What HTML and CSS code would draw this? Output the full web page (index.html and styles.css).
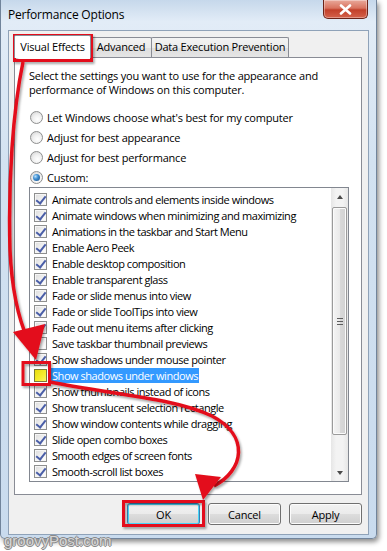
FILE: index.html
```html
<!DOCTYPE html>
<html lang="en">
<head>
    <meta charset="UTF-8">
    <title>Performance Options</title>
    <link rel="stylesheet" href="styles.css">
</head>
<body>
    <div class="window">
        <div class="titlebar">
            <span class="title">Performance Options</span>
            <span class="close">
                <svg width="13" height="11" viewBox="0 0 13 11"><path d="M2 1.5 L11 9.5 M11 1.5 L2 9.5" stroke="#fff" stroke-width="2.6" stroke-linecap="round"/></svg>
            </span>
        </div>

        <div class="client">
            <!-- Tabs -->
            <div class="tabs">
                <div class="tab active">Visual Effects</div>
                <div class="tab tab-adv">Advanced</div>
                <div class="tab tab-dep">Data Execution Prevention</div>
            </div>

            <div class="page">
                <p class="desc">Select the settings you want to use for the appearance and<br>performance of Windows on this computer.</p>

                <div class="radios">
                    <div class="radio-row"><span class="radio"></span>Let Windows choose what's best for my computer</div>
                    <div class="radio-row"><span class="radio"></span>Adjust for best appearance</div>
                    <div class="radio-row"><span class="radio"></span>Adjust for best performance</div>
                    <div class="radio-row"><span class="radio on"></span>Custom:</div>
                </div>

                <div class="listbox">
                    <ul class="items">
                        <li><span class="check on"></span><span class="txt">Animate controls and elements inside windows</span></li>
                        <li><span class="check on"></span><span class="txt">Animate windows when minimizing and maximizing</span></li>
                        <li><span class="check on"></span><span class="txt">Animations in the taskbar and Start Menu</span></li>
                        <li><span class="check on"></span><span class="txt">Enable Aero Peek</span></li>
                        <li><span class="check on"></span><span class="txt">Enable desktop composition</span></li>
                        <li><span class="check on"></span><span class="txt">Enable transparent glass</span></li>
                        <li><span class="check on"></span><span class="txt">Fade or slide menus into view</span></li>
                        <li><span class="check on"></span><span class="txt">Fade or slide ToolTips into view</span></li>
                        <li><span class="check on"></span><span class="txt">Fade out menu items after clicking</span></li>
                        <li><span class="check"></span><span class="txt">Save taskbar thumbnail previews</span></li>
                        <li><span class="check on"></span><span class="txt">Show shadows under mouse pointer</span></li>
                        <li class="selected"><span class="check hot"></span><span class="txt">Show shadows under windows</span></li>
                        <li><span class="check on"></span><span class="txt">Show thumbnails instead of icons</span></li>
                        <li><span class="check on"></span><span class="txt">Show translucent selection rectangle</span></li>
                        <li><span class="check on"></span><span class="txt">Show window contents while dragging</span></li>
                        <li><span class="check on"></span><span class="txt">Slide open combo boxes</span></li>
                        <li><span class="check on"></span><span class="txt">Smooth edges of screen fonts</span></li>
                        <li><span class="check on"></span><span class="txt">Smooth-scroll list boxes</span></li>
                    </ul>
                    <div class="scrollbar">
                        <div class="sb-btn"><span class="arrow-up"></span></div>
                        <div class="sb-track">
                            <div class="thumb"><span class="grip"></span></div>
                        </div>
                        <div class="sb-btn"><span class="arrow-down"></span></div>
                    </div>
                </div>
            </div>

            <!-- Dialog buttons -->
            <div class="buttons">
                <button class="btn default">OK</button>
                <button class="btn">Cancel</button>
                <button class="btn">Apply</button>
            </div>
        </div>
    </div>

    <div class="watermark">groovyPost.com</div>

    <!-- red annotations drawn over the screenshot -->
    <svg class="marks" width="387" height="551" viewBox="0 0 387 551">
        <defs>
            <filter id="shadow" x="-20%" y="-20%" width="140%" height="140%">
                <feDropShadow dx="1.5" dy="2" stdDeviation="1.2" flood-color="#000" flood-opacity="0.35"/>
            </filter>
        </defs>
        <g filter="url(#shadow)" fill="none" stroke="#e3101a" stroke-width="3">
            <rect x="14.5" y="35.5" width="77" height="25"/>
            <rect x="23" y="362.5" width="26.5" height="22"/>
            <rect x="123.5" y="501.5" width="80" height="24"/>
            <path d="M23 62 C 13 110 8 180 10 250 C 12 295 19 320 28 340" stroke-width="3.5"/>
            <path d="M50 382 C 110 394 175 398 212 416 C 250 436 244 470 214 486" stroke-width="3.5"/>
        </g>
        <g filter="url(#shadow)" fill="#e3101a">
            <polygon points="13,332 45,324 36,360"/>
            <polygon points="221,477 203,500 195,474"/>
        </g>
    </svg>
</body>
</html>
```

FILE: styles.css
```css
* {
    box-sizing: border-box;
}
body {
    margin: 0;
    width: 387px;
    height: 551px;
    overflow: hidden;
    position: relative;
    background: #fff;
    font-family: "Open Sans", "Noto Sans", sans-serif;
    font-size: 11px;
    letter-spacing: -0.2px;
    color: #000;
}

/* Window frame */
.window {
    width: 377px;
    height: 539px;
    border: 1px solid #71849b;
    border-top: none;
    border-radius: 0 0 5px 5px;
    background: linear-gradient(180deg, #c6d8eb 0%, #e2ecf7 4%, #d3e2f1 30%, #c9dbee 100%);
    box-shadow: 2px 3px 5px rgba(0, 0, 0, 0.45);
}
.titlebar {
    height: 30px;
    display: flex;
    align-items: flex-start;
}
.title {
    padding: 7px 0 0 7px;
    font-size: 12px;
    line-height: 16px;
}
.close {
    margin-left: auto;
    margin-right: 8px;
    width: 45px;
    height: 19px;
    display: flex;
    align-items: center;
    justify-content: center;
    border: 1px solid #6b2318;
    border-top: none;
    border-radius: 0 0 5px 5px;
    background: linear-gradient(180deg, #e9a99b 0%, #d9735f 45%, #c2402a 55%, #d5624b 100%);
    box-shadow: inset 0 0 0 1px rgba(255, 255, 255, 0.35);
}

/* Client area */
.client {
    margin: 0 7px;
    height: 505px;
    border: 1px solid #8fa2b8;
    background: #f0f0f0;
    padding: 4px 0 0 5px;
}
.tabs {
    display: flex;
    align-items: flex-end;
    height: 22px;
}
.tab {
    height: 20px;
    border: 1px solid #898c95;
    border-bottom: none;
    margin-left: -1px;
    background: linear-gradient(180deg, #f3f3f3 0%, #ebebeb 50%, #dedede 51%, #e5e5e5 100%);
    text-align: center;
    line-height: 18px;
    border-radius: 2px 2px 0 0;
}
.tab.active {
    width: 77px;
    height: 23px;
    margin-left: 0;
    margin-bottom: -1px;
    background: #fff;
    position: relative;
    z-index: 1;
    line-height: 21px;
}
.tab-adv {
    width: 62px;
}
.tab-dep {
    width: 138px;
}

.page {
    width: 348px;
    height: 438px;
    border: 1px solid #898c95;
    background: #fff;
    padding: 11px 0 0 14px;
}
.desc {
    margin: 0;
    line-height: 14px;
}
.radios {
    margin-top: 10px;
}
.radio-row {
    height: 20px;
    display: flex;
    align-items: center;
    gap: 4px;
    padding-left: 1px;
}
.radio {
    width: 13px;
    height: 13px;
    border-radius: 50%;
    border: 1px solid #8e8f8f;
    background: radial-gradient(circle at 60% 65%, #ffffff 0%, #f0f0f0 45%, #cfcfcf 100%);
    display: flex;
    align-items: center;
    justify-content: center;
}
.radio.on::after {
    content: "";
    width: 7px;
    height: 7px;
    border-radius: 50%;
    background: radial-gradient(circle at 35% 35%, #b9e0fb 0%, #3f8fd2 40%, #17497f 100%);
}

/* List of effects */
.listbox {
    width: 320px;
    height: 295px;
    border: 1px solid #828790;
    display: flex;
}
.items {
    flex: 1;
    list-style: none;
    margin: 0;
    padding: 3px 0 0 4px;
    letter-spacing: -0.45px;
}
.items li {
    height: 16px;
    display: flex;
    align-items: center;
    gap: 4px;
    white-space: nowrap;
}
.txt {
    padding: 0 1px;
    line-height: 15px;
}
.items li.selected .txt {
    background: #3399ff;
    color: #fff;
}
.check {
    width: 13px;
    height: 13px;
    flex: none;
    position: relative;
    border: 1px solid #8e8f8f;
    background: linear-gradient(135deg, #dcdcdc 0%, #f4f4f4 60%, #ffffff 100%);
    box-shadow: inset 0 0 0 1px #f6f6f6;
}
.check.on::after {
    content: "";
    position: absolute;
    left: 3px;
    top: 0px;
    width: 4px;
    height: 8px;
    border: solid #4a5ea8;
    border-width: 0 2px 2px 0;
    transform: rotate(38deg);
}
.check.hot {
    border-color: #7a7a3a;
    background: linear-gradient(135deg, #e8dc10 0%, #f6ee30 60%, #fbf56a 100%);
    box-shadow: none;
}

.scrollbar {
    width: 17px;
    display: flex;
    flex-direction: column;
    background: linear-gradient(90deg, #e6e6e6 0%, #f3f3f3 30%, #f3f3f3 70%, #e6e6e6 100%);
}
.sb-btn {
    height: 17px;
    display: flex;
    align-items: center;
    justify-content: center;
}
.arrow-up {
    border: 3.5px solid transparent;
    border-top: none;
    border-bottom: 4px solid #4a4a4a;
}
.arrow-down {
    border: 3.5px solid transparent;
    border-bottom: none;
    border-top: 4px solid #4a4a4a;
}
.sb-track {
    flex: 1;
    padding: 2px 1px 28px;
}
.thumb {
    height: 228px;
    border: 1px solid #9a9a9a;
    border-radius: 2px;
    background: linear-gradient(90deg, #f4f4f4 0%, #eaeaea 50%, #d9d9d9 51%, #d2d2d2 100%);
    box-shadow: inset 0 0 0 1px #fbfbfb;
    display: flex;
    align-items: center;
    justify-content: center;
}
.grip {
    width: 6px;
    height: 7px;
    border-top: 1px solid #5d5d5d;
    border-bottom: 1px solid #5d5d5d;
    background: linear-gradient(180deg, transparent 2px, #5d5d5d 2px, #5d5d5d 3px, transparent 3px);
}

/* Dialog buttons */
.buttons {
    display: flex;
    justify-content: flex-end;
    gap: 8px;
    margin-top: 8px;
    padding-right: 6px;
}
.btn {
    width: 73px;
    height: 22px;
    font-family: inherit;
    font-size: 11px;
    letter-spacing: -0.2px;
    color: #000;
    border: 1px solid #707070;
    border-radius: 3px;
    background: linear-gradient(180deg, #f2f2f2 0%, #ebebeb 48%, #dddddd 50%, #cfcfcf 100%);
    box-shadow: inset 0 0 0 1px #fcfcfc;
    padding: 0;
}
.btn.default {
    border-color: #3c7fb1;
    box-shadow: inset 0 0 0 1px #48d5f7;
}

.watermark {
    position: absolute;
    left: 4px;
    bottom: 2px;
    font-family: "Liberation Sans", Arial, sans-serif;
    font-size: 15px;
    letter-spacing: 0;
    color: #d6d6d6;
    text-shadow: 1px 0 0 #8a8a8a, -1px 0 0 #8a8a8a, 0 1px 0 #8a8a8a, 0 -1px 0 #8a8a8a;
}

.marks {
    position: absolute;
    left: 0;
    top: 0;
    pointer-events: none;
}
```
